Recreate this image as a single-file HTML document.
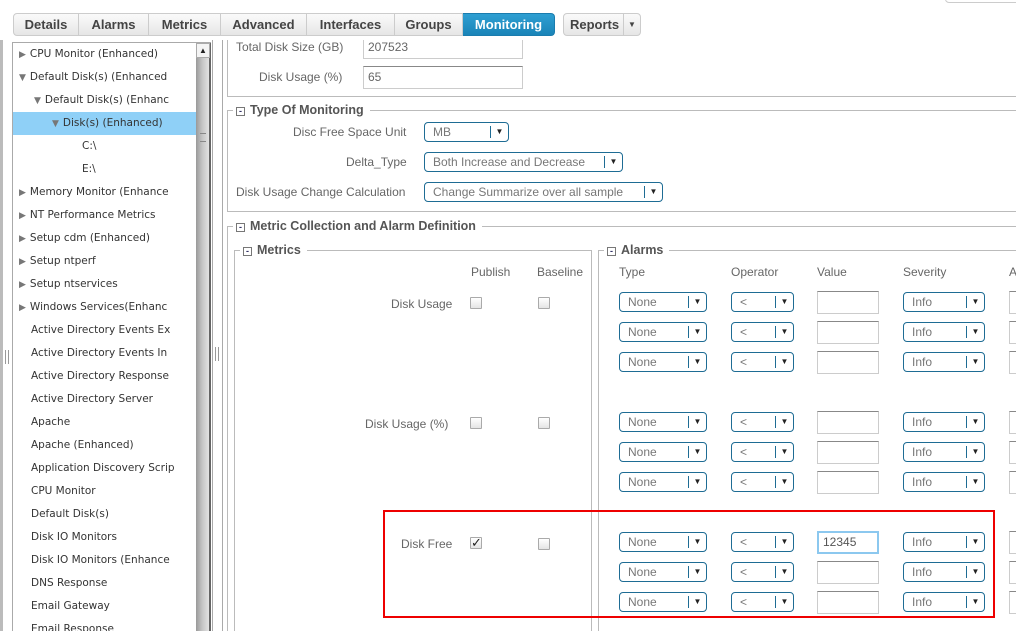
<!DOCTYPE html>
<html style="width:1016px;height:631px;overflow:hidden"><head><meta charset="utf-8"><style>
*{box-sizing:border-box;margin:0;padding:0}
body{width:1016px;height:631px;overflow:hidden;background:#fff;font-family:"Liberation Sans",sans-serif;font-size:12px;color:#555;position:relative}
.a{position:absolute}
.tab{position:absolute;top:13px;height:23px;border:1px solid #ccc;border-left:none;background:linear-gradient(#fafafa,#e6e6e6);font-weight:bold;font-size:13px;color:#444;text-align:center;line-height:21px}
.tree div{position:absolute;left:0;width:183px;height:23px;line-height:23px;font-family:"DejaVu Sans",sans-serif;font-size:10.5px;color:#333;white-space:nowrap;overflow:hidden}
.tri{color:#777;font-size:9px;margin-right:4px}
.fs{position:absolute;border:1px solid #bbb;border-bottom:none}
.lg{position:absolute;background:#fff;font-weight:bold;font-size:12.5px;color:#555;padding:0 6px 0 3px;line-height:14px}
.lg b{display:inline-block;width:9px;height:9px;border:1px solid #777;font-size:9px;line-height:6px;text-align:center;color:#336;margin-right:5px;vertical-align:0px;font-weight:bold}
.sel{position:absolute;height:20px;border:1px solid #1e6c94;border-radius:4px;background:#fff;font-size:12px;color:#777;line-height:18px;padding-left:8px}
.sel:after{content:"▼";position:absolute;right:0;top:3px;width:17px;height:12px;border-left:1px solid #1e6c94;font-size:8px;line-height:12px;text-align:center;color:#222}
.inp{position:absolute;height:23px;border:1px solid #ccc;border-top-color:#888;background:#fff;font-size:12px;color:#666;line-height:21px;padding-left:4px}
.cb{position:absolute;width:12px;height:12px;border:1px solid #aaa;background:linear-gradient(#fff,#e4e4e4);border-radius:1px}
.lbl{position:absolute;font-size:12px;color:#666;text-align:right;white-space:nowrap}
</style></head><body>
<div class="a" style="left:945px;top:-6px;width:80px;height:9px;border:1px solid #ccc;border-radius:4px"></div>
<div class="tab" style="left:13px;width:66px;border-left:1px solid #ccc;border-radius:4px 0 0 4px">Details</div>
<div class="tab" style="left:79px;width:70px">Alarms</div>
<div class="tab" style="left:149px;width:72px">Metrics</div>
<div class="tab" style="left:221px;width:86px">Advanced</div>
<div class="tab" style="left:307px;width:88px">Interfaces</div>
<div class="tab" style="left:395px;width:68px">Groups</div>
<div class="tab" style="left:463px;width:92px;background:linear-gradient(#2e9fd2,#1a84b8);color:#fff;border-color:#1a7cae;border-radius:0 4px 4px 0">Monitoring</div>
<div class="tab" style="left:563px;width:78px;border-left:1px solid #ccc;border-radius:4px;text-align:left;padding-left:6px">Reports<span style="position:absolute;right:0;top:0;width:17px;height:21px;border-left:1px solid #ccc;font-size:8px;text-align:center">▼</span></div>

<div class="a" style="left:0;top:40px;width:3px;height:591px;background:#bbb"></div>
<div class="a" style="left:5px;top:350px;width:4px;height:14px;border-left:1px solid #999;border-right:1px solid #999"></div>
<div class="a" style="left:12px;top:42px;width:199px;height:589px;border:1px solid #aaa;border-bottom:none"></div>
<div class="a" style="left:196px;top:43px;width:15px;height:588px;background:linear-gradient(90deg,#999,#c4c4c4 40%,#e2e2e2 85%,#666 88%,#666);"></div>
<div class="a" style="left:196px;top:43px;width:14px;height:15px;background:#f4f4f4;border:1px solid #aaa;font-size:8px;text-align:center;line-height:13px;color:#222">▲</div>
<div class="a" style="left:200px;top:133px;width:6px;height:9px;border-top:1px solid #888;border-bottom:1px solid #888"></div>
<div class="a" style="left:212px;top:40px;width:1px;height:591px;background:#aaa"></div>
<div class="a" style="left:222px;top:40px;width:1px;height:591px;background:#aaa"></div>
<div class="a" style="left:215px;top:347px;width:4px;height:14px;border-left:1px solid #999;border-right:1px solid #999"></div>

<div class="a tree" style="left:13px;top:43px;width:183px;height:588px;overflow:hidden">
<div style="top:0;padding-left:6px"><span class="tri">▶</span>CPU Monitor (Enhanced)</div>
<div style="top:23px;padding-left:6px"><span class="tri">▼</span>Default Disk(s) (Enhanced</div>
<div style="top:46px;padding-left:21px"><span class="tri">▼</span>Default Disk(s) (Enhanc</div>
<div style="top:69px;padding-left:39px;background:#8fd0f7"><span class="tri">▼</span>Disk(s) (Enhanced)</div>
<div style="top:92px;padding-left:69px">C:\</div>
<div style="top:115px;padding-left:69px">E:\</div>
<div style="top:138px;padding-left:6px"><span class="tri">▶</span>Memory Monitor (Enhance</div>
<div style="top:161px;padding-left:6px"><span class="tri">▶</span>NT Performance Metrics</div>
<div style="top:184px;padding-left:6px"><span class="tri">▶</span>Setup cdm (Enhanced)</div>
<div style="top:207px;padding-left:6px"><span class="tri">▶</span>Setup ntperf</div>
<div style="top:230px;padding-left:6px"><span class="tri">▶</span>Setup ntservices</div>
<div style="top:253px;padding-left:6px"><span class="tri">▶</span>Windows Services(Enhanc</div>
<div style="top:276px;padding-left:18px">Active Directory Events Ex</div>
<div style="top:299px;padding-left:18px">Active Directory Events In</div>
<div style="top:322px;padding-left:18px">Active Directory Response</div>
<div style="top:345px;padding-left:18px">Active Directory Server</div>
<div style="top:368px;padding-left:18px">Apache</div>
<div style="top:391px;padding-left:18px">Apache (Enhanced)</div>
<div style="top:414px;padding-left:18px">Application Discovery Scrip</div>
<div style="top:437px;padding-left:18px">CPU Monitor</div>
<div style="top:460px;padding-left:18px">Default Disk(s)</div>
<div style="top:483px;padding-left:18px">Disk IO Monitors</div>
<div style="top:506px;padding-left:18px">Disk IO Monitors (Enhance</div>
<div style="top:529px;padding-left:18px">DNS Response</div>
<div style="top:552px;padding-left:18px">Email Gateway</div>
<div style="top:575px;padding-left:18px">Email Response</div>
</div>

<div class="a" style="left:227px;top:40px;width:789px;height:57px;border:1px solid #bbb;border-top:none;border-right:none"></div>
<div class="lbl" style="left:236px;top:40px">Total Disk Size (GB)</div>
<div class="inp" style="left:363px;top:40px;width:160px;height:19px;border-top:none;line-height:14px">207523</div>
<div class="lbl" style="left:259px;top:70px">Disk Usage (%)</div>
<div class="inp" style="left:363px;top:66px;width:160px;line-height:20px">65</div>

<div class="fs" style="left:227px;top:110px;width:789px;height:102px;border-bottom:1px solid #bbb;border-right:none"></div>
<div class="lg" style="left:233px;top:103px"><b>-</b>Type Of Monitoring</div>
<div class="lbl" style="left:293px;top:125px">Disc Free Space Unit</div>
<div class="sel" style="left:424px;top:122px;width:85px">MB</div>
<div class="lbl" style="left:346px;top:155px">Delta_Type</div>
<div class="sel" style="left:424px;top:152px;width:199px">Both Increase and Decrease</div>
<div class="lbl" style="left:236px;top:185px">Disk Usage Change Calculation</div>
<div class="sel" style="left:424px;top:182px;width:239px">Change Summarize over all sample</div>

<div class="fs" style="left:227px;top:226px;width:789px;height:405px;border-right:none"></div>
<div class="lg" style="left:233px;top:219px"><b>-</b>Metric Collection and Alarm Definition</div>
<div class="fs" style="left:234px;top:250px;width:358px;height:381px"></div>
<div class="lg" style="left:240px;top:243px"><b>-</b>Metrics</div>
<div class="fs" style="left:598px;top:250px;width:418px;height:381px;border-right:none"></div>
<div class="lg" style="left:604px;top:243px"><b>-</b>Alarms</div>

<div class="lbl" style="left:471px;top:265px">Publish</div>
<div class="lbl" style="left:537px;top:265px">Baseline</div>
<div class="lbl" style="left:619px;top:265px">Type</div>
<div class="lbl" style="left:731px;top:265px">Operator</div>
<div class="lbl" style="left:817px;top:265px">Value</div>
<div class="lbl" style="left:903px;top:265px">Severity</div>
<div class="lbl" style="left:1009px;top:265px">A</div>

<div class="lbl" style="left:391px;top:297px">Disk Usage</div>
<div class="cb" style="left:470px;top:297px"></div><div class="cb" style="left:538px;top:297px"></div>
<div class="lbl" style="left:365px;top:417px">Disk Usage (%)</div>
<div class="cb" style="left:470px;top:417px"></div><div class="cb" style="left:538px;top:417px"></div>
<div class="lbl" style="left:401px;top:537px">Disk Free</div>
<div class="cb" style="left:470px;top:537px;font-size:13px;line-height:9px;color:#222;text-align:center">✓</div><div class="cb" style="left:538px;top:538px"></div>

<div id="rows"></div>
<script>
var h='',ys=[302,332,362,422,452,482,542,572,602];
ys.forEach(function(y,i){var t=y-10;
h+='<div class="sel" style="left:619px;top:'+t+'px;width:88px">None</div>';
h+='<div class="sel" style="left:731px;top:'+t+'px;width:63px">&lt;</div>';
h+='<div class="inp" style="left:817px;top:'+(t-1)+'px;width:62px;'+(i==6?'border:2px solid #8cc8ef;color:#555;line-height:19px':'')+'">'+(i==6?'12345':'')+'</div>';
h+='<div class="sel" style="left:903px;top:'+t+'px;width:82px">Info</div>';
h+='<div class="inp" style="left:1009px;top:'+(t-1)+'px;width:7px;border-right:none"></div>';});
document.getElementById('rows').innerHTML=h;
</script>
<div class="a" style="left:383px;top:510px;height:108px;border:2px solid #e00;width:612px"></div>
</body></html>
